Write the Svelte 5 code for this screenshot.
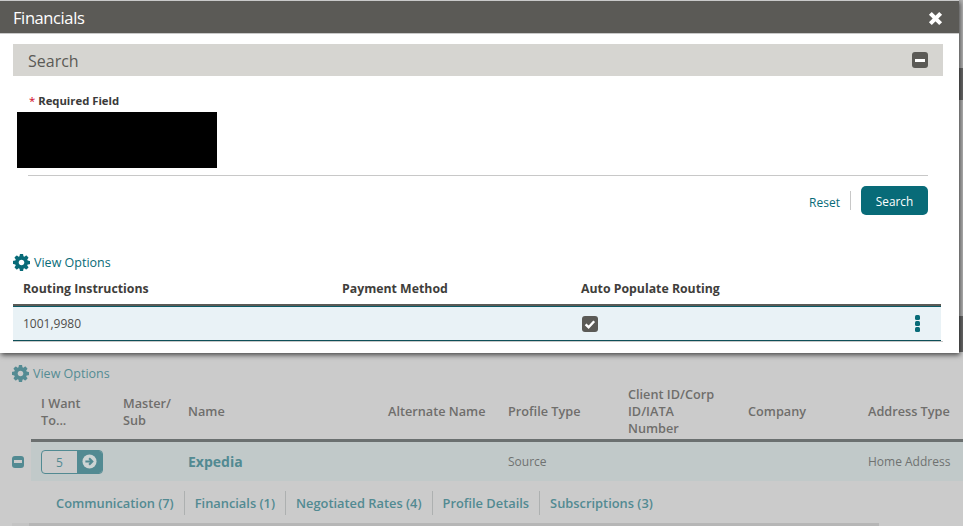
<script lang="ts">
  const bgCols = ["I Want To...", "Master/ Sub", "Name", "Alternate Name", "Profile Type", "Client ID/Corp ID/IATA Number", "Company", "Address Type"];
  const links = ["Communication (7)", "Financials (1)", "Negotiated Rates (4)", "Profile Details", "Subscriptions (3)"];
  const gear = "M1152 896q0-106-75-181t-181-75-181 75-75 181 75 181 181 75 181-75 75-181zm512-109v222q0 12-8 23t-20 13l-185 28q-19 54-39 91 35 50 107 138 10 12 10 25t-9 23q-27 37-99 108t-94 71q-12 0-26-9l-138-108q-44 23-91 38-16 136-29 186-7 28-36 28h-222q-14 0-24.5-8.5t-11.5-21.5l-28-184q-49-16-90-37l-141 107q-10 9-25 9-14 0-25-11-126-114-165-168-7-10-7-23 0-12 8-23 15-21 51-66.5t54-70.5q-27-50-41-99l-183-27q-13-2-21-12.5t-8-23.5v-222q0-12 8-23t19-13l186-28q14-46 39-92-40-57-107-138-10-12-10-24 0-10 9-23 26-36 98.5-107.5t94.5-71.5q13 0 26 10l138 107q44-23 91-38 16-136 29-186 7-28 36-28h222q14 0 24.5 8.5t11.5 21.5l28 184q49 16 90 37l142-107q9-9 24-9 13 0 25 10 129 119 165 170 7 8 7 22 0 12-8 23-15 21-51 66.5t-54 70.5q26 50 41 98l183 28q13 2 21 12.5t8 23.5z";
</script>

<div class="page">
  <div class="back">
    <div class="viewOpts backOpts">
      <svg class="gear" viewBox="128 128 1536 1536"><path d={gear} /></svg>
      <span>View Options</span>
    </div>
    <div class="bgHead">
      {#each bgCols as col}
        <div class="bgTh">{col}</div>
      {/each}
    </div>
    <div class="bgRowWrap">
      <div class="minus small"><i></i></div>
      <div class="bgRow">
        <div class="wantTo">
          <span class="num">5</span>
          <span class="go">
            <svg viewBox="0 0 16 16"><circle cx="8" cy="8" r="7.5" fill="#cdd4d4" /><path d="M3.6 8h7M7.6 4.6 11 8l-3.4 3.4" fill="none" stroke="#528a92" stroke-width="2.2" /></svg>
          </span>
        </div>
        <div class="bgName">Expedia</div>
        <div class="bgSource">Source</div>
        <div class="bgAddr">Home Address</div>
      </div>
    </div>
    <div class="bgLinks">
      {#each links as link}
        <span class="bgLink">{link}</span>
      {/each}
    </div>
    <div class="bgRule"><div></div></div>
  </div>

  <div class="scrollbar">
    <div class="thumb one"></div>
    <div class="thumb two"></div>
  </div>

  <div class="modal">
    <div class="titleBar">
      <span>Financials</span>
      <svg class="close" viewBox="0 0 14 14"><path d="M2.2 2.2l9.6 9.6M11.8 2.2l-9.6 9.6" stroke="#fff" stroke-width="3.8" /></svg>
    </div>
    <div class="body">
      <div class="searchHead">
        <span>Search</span>
        <div class="minus"><i></i></div>
      </div>
      <div class="required"><span class="star">*</span> Required Field</div>
      <div class="redacted"></div>
      <div class="formRule"></div>
      <div class="actions">
        <a class="reset" href="#reset">Reset</a>
        <span class="sep"></span>
        <button class="searchBtn" type="button">Search</button>
      </div>
      <div class="viewOpts">
        <svg class="gear" viewBox="128 128 1536 1536"><path d={gear} /></svg>
        <span>View Options</span>
      </div>
      <div class="head">
        <div>Routing Instructions</div>
        <div>Payment Method</div>
        <div>Auto Populate Routing</div>
      </div>
      <div class="row">
        <div>1001,9980</div>
        <div></div>
        <div>
          <span class="check">
            <svg viewBox="0 0 16 16"><path d="M3.6 8.3l3 2.9 5.6-6" fill="none" stroke="#fff" stroke-width="2.4" /></svg>
          </span>
        </div>
        <div class="dots"><i></i><i></i><i></i></div>
      </div>
    </div>
  </div>
</div>

<style>
  :global(body) {
    margin: 0;
    background: #cbcbcb;
  }

  .page {
    width: 963px;
    height: 526px;
    position: relative;
    overflow: hidden;
    background: #cbcbcb;
    font-family: "Open Sans", "Liberation Sans", sans-serif;
  }

  /* page behind the dialog, dimmed */
  .back {
    padding: 354px 0 0 12px;
  }

  .viewOpts {
    display: flex;
    align-items: center;
    gap: 4px;
    height: 18px;
    color: #086b78;
    font-size: 12.5px;
  }

  .backOpts {
    color: #548b93;
    margin-top: 10px;
  }

  .gear {
    width: 17px;
    height: 17px;
    fill: #086b78;
  }

  .backOpts .gear {
    fill: #548b93;
  }

  .bgHead {
    display: grid;
    grid-template-columns: 82px 65px 200px 120px 120px 120px 120px 95px;
    align-items: center;
    height: 55px;
    margin-left: 19px;
    padding: 2px 0 0 10px;
    border-bottom: 3px solid #6b7070;
    color: #6f6e6b;
    font-size: 12.7px;
    font-weight: 600;
    line-height: 17px;
  }

  .bgTh {
    width: min-content;
    min-width: 50px;
  }

  .bgTh:nth-child(3),
  .bgTh:nth-child(4),
  .bgTh:nth-child(5),
  .bgTh:nth-child(7),
  .bgTh:nth-child(8) {
    white-space: nowrap;
  }

  .bgTh:nth-child(6) {
    width: 92px;
  }

  .bgRowWrap {
    display: flex;
    align-items: center;
    gap: 7px;
  }

  .bgRow {
    display: grid;
    grid-template-columns: 147px 320px 240px 120px;
    align-items: center;
    flex: 1;
    height: 39px;
    padding-left: 10px;
    background: #c1c9c9;
    font-size: 12px;
    color: #6f7271;
  }

  .wantTo {
    display: flex;
    width: 62px;
    height: 24px;
    box-sizing: border-box;
    border: 1px solid #528a92;
    border-radius: 4px;
    overflow: hidden;
    background: #cbcbcb;
  }

  .num {
    width: 35px;
    text-align: center;
    line-height: 24px;
    color: #528a92;
  }

  .go {
    flex: 1;
    display: flex;
    align-items: center;
    justify-content: center;
    background: #528a92;
  }

  .go svg {
    width: 15px;
    height: 15px;
  }

  .bgName {
    color: #528a92;
    font-size: 14px;
    font-weight: 700;
  }

  .bgSource {
    grid-column: 3;
  }

  .bgAddr {
    grid-column: 4;
    margin-left: 120px;
    white-space: nowrap;
  }

  .bgLinks {
    display: flex;
    align-items: center;
    height: 44px;
    padding-left: 33px;
  }

  .bgLink {
    padding: 0 10px 0 10px;
    border-right: 1px solid #adb0b0;
    color: #528a92;
    font-size: 12.85px;
    font-weight: 600;
    line-height: 24px;
  }

  .bgLink:first-child {
    padding-left: 11px;
  }

  .bgLink:last-child {
    border-right: 0;
  }

  .bgRule {
    height: 3px;
    margin-top: -2px;
    width: 867px;
    background: #c4c4c4;
  }

  .bgRule div {
    height: 3px;
    margin-left: 17px;
    background: #b6b6b6;
  }

  .scrollbar {
    position: absolute;
    top: 0;
    right: 0;
    width: 4px;
    height: 352px;
    background: #b4b4b4;
  }

  .thumb {
    position: absolute;
    left: 0;
    width: 100%;
    background: #696969;
  }

  .thumb.one {
    top: 68px;
    height: 32px;
  }

  .thumb.two {
    top: 316px;
    height: 36px;
  }

  .modal {
    position: absolute;
    left: 0;
    top: 0;
    width: 959px;
    height: 353px;
    box-sizing: border-box;
    border-top: 1px solid #c9c9c9;
    background: #fff;
    box-shadow: 1px 2px 5px rgba(0, 0, 0, 0.65);
  }

  .titleBar {
    display: flex;
    align-items: center;
    justify-content: space-between;
    height: 32px;
    padding: 0 16px 0 13px;
    border-bottom: 1px solid #c9c9c9;
    background: #5b5a56;
    color: #fff;
    font-size: 16.5px;
    letter-spacing: -0.4px;
  }

  .close {
    width: 15px;
    height: 15px;
    margin-top: 3px;
  }

  .body {
    padding: 10px 16px 0 13px;
  }

  .searchHead {
    display: flex;
    align-items: center;
    justify-content: space-between;
    height: 32px;
    padding: 0 15px;
    background: #d6d5d1;
    color: #5b5a56;
    font-size: 16px;
  }

  .searchHead span {
    margin-top: 2px;
  }

  .minus {
    display: flex;
    align-items: center;
    justify-content: center;
    width: 16px;
    height: 16px;
    border-radius: 3px;
    background: #5b5a56;
  }

  .minus i {
    width: 10px;
    height: 3px;
    background: #fff;
  }

  .minus.small {
    width: 12px;
    height: 12px;
    background: #528a92;
    flex: none;
  }

  .minus.small i {
    width: 8px;
    background: #cbcbcb;
  }

  .required {
    margin: 16px 0 0 16px;
    height: 20px;
    color: #3a3a3a;
    font-size: 11.3px;
    font-weight: 700;
    line-height: 17px;
  }

  .star {
    color: #d0021b;
    font-weight: 400;
  }

  .redacted {
    width: 200px;
    height: 56px;
    margin-left: 4px;
    background: #000;
  }

  .formRule {
    height: 1px;
    margin: 7px 15px 0 15px;
    background: #c8c8c8;
  }

  .actions {
    display: flex;
    align-items: center;
    justify-content: flex-end;
    height: 29px;
    margin: 10px 15px 0 0;
  }

  .reset {
    color: #086b78;
    font-size: 12px;
    text-decoration: none;
    margin-top: 3px;
  }

  .sep {
    width: 1px;
    height: 19px;
    margin: 0 10px 0 10px;
    background: #c8c8c8;
  }

  .searchBtn {
    width: 67px;
    height: 29px;
    padding: 0;
    border: 0;
    border-radius: 5px;
    background: #086b78;
    color: #fff;
    font: inherit;
    font-size: 11.8px;
  }

  .viewOpts:not(.backOpts) {
    margin-top: 38px;
  }

  .head {
    display: grid;
    grid-template-columns: 319px 239px 1fr;
    align-items: center;
    height: 35px;
    width: 928px;
    padding: 1px 0 0 10px;
    box-sizing: border-box;
    border-bottom: 2px solid #5b5a56;
    color: #3f3e3b;
    font-size: 12.3px;
    font-weight: 700;
  }

  .row {
    display: grid;
    grid-template-columns: 319px 239px 1fr 40px;
    align-items: center;
    position: relative;
    width: 928px;
    height: 35px;
    box-sizing: border-box;
    padding-left: 10px;
    background: #e9f2f6;
    border-top: 1px solid #0e5a66;
    border-bottom: 1px solid #0e4f58;
    color: #4f4e4b;
    font-size: 12px;
  }

  .row::after {
    content: "";
    position: absolute;
    left: 0;
    right: -2px;
    bottom: -2px;
    height: 1px;
    background: #c8c8c8;
  }

  .check {
    display: block;
    width: 16px;
    height: 16px;
    margin-left: 1px;
    border-radius: 3px;
    background: #5b5a56;
  }

  .check svg {
    display: block;
  }

  .dots {
    display: flex;
    flex-direction: column;
    align-items: center;
    gap: 1px;
    width: 5px;
    margin-left: 14px;
  }

  .dots i {
    width: 5px;
    height: 5px;
    border-radius: 1.5px;
    background: #086b78;
  }
</style>
